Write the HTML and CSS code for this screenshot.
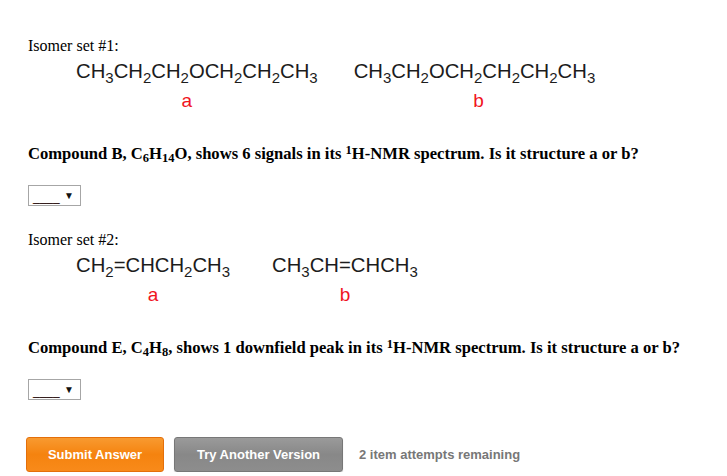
FILE: index.html
```html
<!DOCTYPE html>
<html lang="en">
<head>
  <meta charset="UTF-8" />
  <title>Isomer sets</title>
  <link rel="stylesheet" href="styles.css">
</head>
<body>
  <div class="page">
    <div class="set-title">Isomer set #1:</div>
    <div class="isomers set1">
      <div class="isomer">
        <div class="formula">CH<sub>3</sub>CH<sub>2</sub>CH<sub>2</sub>OCH<sub>2</sub>CH<sub>2</sub>CH<sub>3</sub></div>
        <div class="label">a</div>
      </div>
      <div class="isomer">
        <div class="formula">CH<sub>3</sub>CH<sub>2</sub>OCH<sub>2</sub>CH<sub>2</sub>CH<sub>2</sub>CH<sub>3</sub></div>
        <div class="label">b</div>
      </div>
    </div>
    <p class="question">Compound B, C<sub>6</sub>H<sub>14</sub>O, shows 6 signals in its <sup>1</sup>H-NMR spectrum. Is it structure a or b?</p>
    <div class="dropdown"><span class="blank">____</span><span class="arrow">&#9660;</span></div>

    <div class="set-title second">Isomer set #2:</div>
    <div class="isomers set2">
      <div class="isomer">
        <div class="formula">CH<sub>2</sub>=CHCH<sub>2</sub>CH<sub>3</sub></div>
        <div class="label">a</div>
      </div>
      <div class="isomer">
        <div class="formula">CH<sub>3</sub>CH=CHCH<sub>3</sub></div>
        <div class="label">b</div>
      </div>
    </div>
    <p class="question">Compound E, C<sub>4</sub>H<sub>8</sub>, shows 1 downfield peak in its <sup>1</sup>H-NMR spectrum. Is it structure a or b?</p>
    <div class="dropdown"><span class="blank">____</span><span class="arrow">&#9660;</span></div>

    <div class="actions">
      <button class="btn submit">Submit Answer</button>
      <button class="btn another">Try Another Version</button>
      <span class="attempts">2 item attempts remaining</span>
    </div>
  </div>
</body>
</html>
```

FILE: styles.css
```css
body { margin: 0; background: #fff; color: #000; font-family: "Liberation Serif", "Times New Roman", serif; font-size: 16px; }
.page { padding: 37px 0 0 28px; }
.set-title { line-height: 18px; }
.set-title.second { margin-top: 25px; }
.isomers { display: flex; margin-top: 5px; margin-left: 48px; }
.set1 { gap: 36px; }
.set2 { gap: 42px; }
.isomer { display: flex; flex-direction: column; align-items: center; }
.formula { font-family: "Liberation Sans", Arial, sans-serif; font-size: 20.3px; line-height: 22px; color: #1c1c1c; }
.formula sub { font-size: 15px; vertical-align: -5px; line-height: 0; }
.label { font-family: "Liberation Sans", Arial, sans-serif; font-size: 19px; line-height: 20px; color: #f0141e; margin-top: 9px; }
.set1 .isomer:first-child .label { margin-right: 20px; }
.set1 .isomer:last-child .label { margin-left: 8px; }
.question { font-weight: bold; font-size: 16.6px; margin: 33px 0 0; line-height: 20px; }
.question sub { font-size: 12.5px; line-height: 0; vertical-align: -3px; }
.question sup { font-size: 12.5px; line-height: 0; vertical-align: 5px; }
.dropdown { display: inline-flex; align-items: center; justify-content: space-between; box-sizing: border-box; width: 53px; height: 21px; margin-top: 21px; padding: 0 6px 0 4px; border: 1px solid #a6a6a6; background: #fff; font-family: "Liberation Sans", Arial, sans-serif; }
.blank { font-size: 12px; color: #1a0000; position: relative; top: 1px; }
.arrow { font-size: 10px; color: #111; }
.actions { display: flex; align-items: center; margin: 37px 0 0 -2px; }
.btn { font-family: "Liberation Sans", Arial, sans-serif; font-weight: bold; font-size: 13px; color: #fff; height: 35px; border-radius: 3px; padding: 0; white-space: nowrap; cursor: pointer; }
.submit { width: 138px; background: linear-gradient(#f89a30, #f5830f 50%, #f88a1a); border: 1px solid #e46f0a; }
.another { width: 169px; margin-left: 10px; background: linear-gradient(#9a9a9a, #888 50%, #8d8d8d); border: 1px solid #777; box-shadow: 0 1px 1px #ccc; }
.attempts { margin-left: 16px; font-family: "Liberation Sans", Arial, sans-serif; font-weight: bold; font-size: 13px; color: #777; }
```
